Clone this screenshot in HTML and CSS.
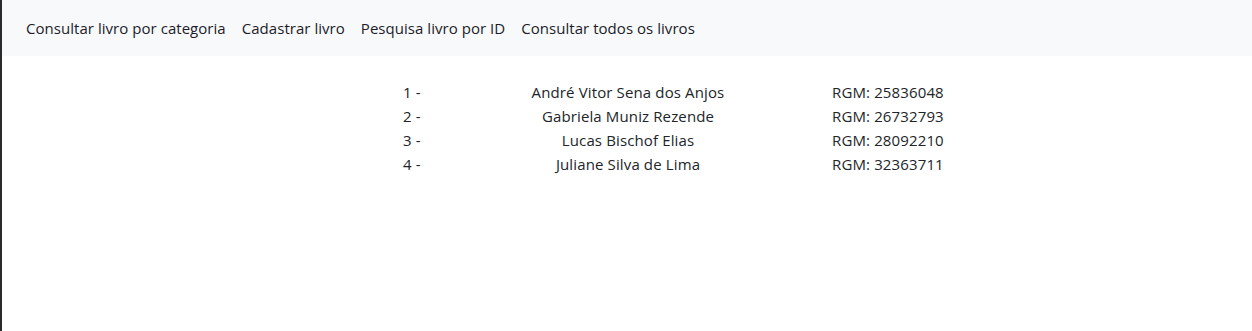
FILE: index.html
```html
<!DOCTYPE html>
<html lang="pt-BR">
<head>
<meta charset="utf-8">
<title>Livros</title>
<link rel="stylesheet" href="styles.css">
</head>
<body>
<nav class="navbar">
  <ul class="nav-list">
    <li><a class="nav-link" href="#">Consultar livro por categoria</a></li>
    <li><a class="nav-link" href="#">Cadastrar livro</a></li>
    <li><a class="nav-link" href="#">Pesquisa livro por ID</a></li>
    <li><a class="nav-link" href="#">Consultar todos os livros</a></li>
  </ul>
</nav>
<main class="members">
  <div class="member"><span class="num">1 -</span><span class="name">André Vitor Sena dos Anjos</span><span class="rgm">RGM: 25836048</span></div>
  <div class="member"><span class="num">2 -</span><span class="name">Gabriela Muniz Rezende</span><span class="rgm">RGM: 26732793</span></div>
  <div class="member"><span class="num">3 -</span><span class="name">Lucas Bischof Elias</span><span class="rgm">RGM: 28092210</span></div>
  <div class="member"><span class="num">4 -</span><span class="name">Juliane Silva de Lima</span><span class="rgm">RGM: 32363711</span></div>
</main>
</body>
</html>
```
FILE: styles.css
```css
html, body {
  margin: 0;
  padding: 0;
  height: 100%;
}
body {
  border-left: 2px solid #2b2b2b;
  background: #fff;
  font-family: "Open Sans", "Noto Sans", sans-serif;
  font-size: 15px;
  line-height: 24px;
  color: #212529;
  box-sizing: border-box;
}
.navbar {
  background: #f8f9fa;
  padding: 8px 16px;
}
.nav-list {
  list-style: none;
  margin: 0;
  padding: 0;
  display: flex;
  letter-spacing: 0.04px;
}
.nav-link {
  display: block;
  padding: 8px 8px;
  color: #1c1c2a;
  text-decoration: none;
}
.members {
  margin-top: 24px;
  padding-left: 401px;
  letter-spacing: 0.13px;
}
.member {
  display: grid;
  grid-template-columns: 21px 408px auto;
}
.name {
  text-align: center;
}
```
